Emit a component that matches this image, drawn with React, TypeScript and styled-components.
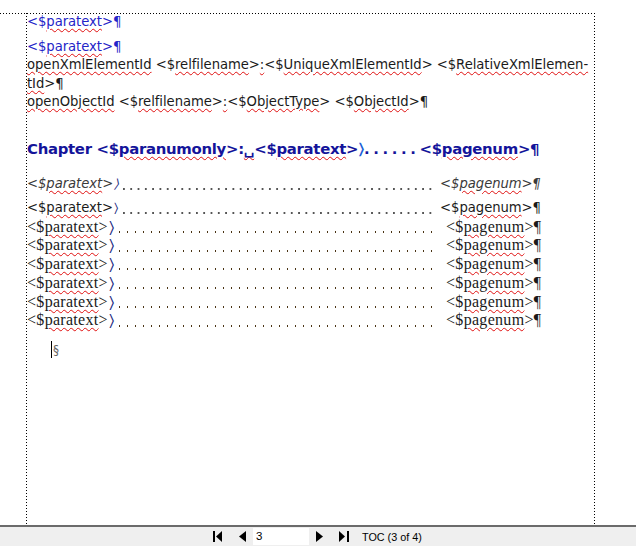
import React from "react"
import styled, { createGlobalStyle } from "styled-components"

const GlobalStyle = createGlobalStyle`
  html, body {
    margin: 0;
    padding: 0;
    background: #ffffff;
  }
  #root {
    height: 546px;
  }
`

const Window = styled.div`
  height: 546px;
  display: flex;
  flex-direction: column;
  overflow: hidden;
`

const Canvas = styled.div`
  flex: 1;
  background: #ffffff;
  padding-top: 13px;
  overflow: hidden;
`

const Page = styled.div`
  width: 595px;
  height: 100%;
  box-sizing: border-box;
  padding-left: 27px;
  background:
    linear-gradient(to right, #000 1px, transparent 1px) 0 0 / 3px 1px repeat-x,
    linear-gradient(to bottom, #000 1px, transparent 1px) 26px 0 / 1px 3px repeat-y,
    linear-gradient(to bottom, #000 1px, transparent 1px) 594px 0 / 1px 3px repeat-y;
  background-color: #fff;
`

const Line = styled.div<{ $color?: string; $gap?: number }>`
  font-family: "DejaVu Sans", Tahoma, sans-serif;
  font-size: 13.2px;
  letter-spacing: -0.05px;
  line-height: 18.5px;
  white-space: nowrap;
  color: ${p => p.$color ?? "#1a1a1a"};
  margin-top: ${p => p.$gap ?? 0}px;
`

const Squiggle = styled.span`
  text-decoration: underline wavy #e01010;
  text-decoration-thickness: 1px;
  text-underline-offset: 2px;
`

const Pilcrow = styled.span`
  letter-spacing: 0;
`

const Heading = styled.div`
  font-family: "DejaVu Sans", Tahoma, sans-serif;
  font-weight: bold;
  font-size: 14.9px;
  letter-spacing: -0.3px;
  line-height: 20px;
  color: #14149a;
  white-space: nowrap;
  margin-top: 27px;
`

const HeadingDots = styled.span`
  letter-spacing: 3.6px;
`

const TabMark = styled.span<{ $light?: boolean }>`
  color: ${p => (p.$light ? "#1b5fd8" : "#1c2a80")};
  margin-left: 1px;
`

const TocRow = styled.div<{ $serif?: boolean; $italic?: boolean; $gap?: number }>`
  display: flex;
  width: 514px;
  white-space: nowrap;
  font-family: ${p => (p.$serif ? '"Liberation Serif", "Times New Roman", serif' : '"DejaVu Sans", Tahoma, sans-serif')};
  font-size: ${p => (p.$serif ? "16px" : "13.2px")};
  font-style: ${p => (p.$italic ? "italic" : "normal")};
  letter-spacing: ${p => (p.$serif ? "0.3px" : "-0.05px")};
  line-height: ${p => (p.$serif ? "18.8px" : "18.5px")};
  color: ${p => (p.$italic ? "#3a3a3a" : "#1a1a1a")};
  margin-top: ${p => p.$gap ?? 0}px;
`

const Leader = styled.span<{ $serif?: boolean }>`
  flex: 1;
  margin: 0 ${p => (p.$serif ? "10px 0 5px" : "7px 0 5px")};
  background-image: linear-gradient(
    to right,
    ${p => (p.$serif ? "#4a3414" : "#555")} 1.5px,
    transparent 1.5px
  );
  background-size: ${p => (p.$serif ? "8px 1.5px" : "7.3px 1.5px")};
  background-repeat: repeat-x;
  background-position: left bottom 4px;
`

const CursorLine = styled.div`
  margin-top: 11px;
  margin-left: 24px;
  display: flex;
  align-items: center;
  height: 17px;
  font-family: "DejaVu Sans", Tahoma, sans-serif;
  font-size: 12px;
  color: #666;
`

const Caret = styled.span`
  width: 1px;
  height: 17px;
  background: #000;
  margin-right: 1px;
`

const StatusBar = styled.div`
  height: 19px;
  border-top: 2px solid #6b6b6b;
  background: #efefef;
  display: flex;
  align-items: center;
  padding-left: 213px;
  font-family: "Liberation Sans", Arial, sans-serif;
  font-size: 10.8px;
  color: #000;
`

const NavButton = styled.button<{ $space?: number }>`
  border: none;
  background: none;
  padding: 0;
  margin-right: ${p => p.$space ?? 0}px;
  display: flex;
  align-items: center;
  height: 19px;
`

const PageInput = styled.div`
  width: 56px;
  height: 17px;
  background: #fff;
  box-sizing: border-box;
  padding-left: 3px;
  line-height: 17px;
  font-size: 11.5px;
  margin-right: 7px;
`

const StatusText = styled.span`
  margin-left: 13px;
`

const P = () => <Pilcrow>¶</Pilcrow>

const tocRows = [0, 1, 2, 3, 4, 5]

export default function App() {
  return (
    <Window>
      <GlobalStyle />
      <Canvas>
        <Page>
          <Line $color="#2424c8">&lt;$<Squiggle>paratext</Squiggle>&gt;<P /></Line>
          <Line $color="#2424c8" $gap={6}>&lt;$<Squiggle>paratext</Squiggle>&gt;<P /></Line>
          <Line>
            <Squiggle>openXmlElementId</Squiggle> &lt;$<Squiggle>relfilename</Squiggle>&gt;<Squiggle>:</Squiggle>&lt;$<Squiggle>UniqueXmlElementId</Squiggle>&gt; &lt;$<Squiggle>RelativeXmlElemen-</Squiggle>
          </Line>
          <Line><Squiggle>tId</Squiggle>&gt;<P /></Line>
          <Line>
            <Squiggle>openObjectId</Squiggle> &lt;$<Squiggle>relfilename</Squiggle>&gt;<Squiggle>:</Squiggle>&lt;$<Squiggle>ObjectType</Squiggle>&gt; &lt;$<Squiggle>ObjectId</Squiggle>&gt;<P />
          </Line>
          <Heading>
            Chapter &lt;$<Squiggle>paranumonly</Squiggle>&gt;:<Squiggle>&#x2423;</Squiggle>&lt;$<Squiggle>paratext</Squiggle>&gt;<TabMark $light>&#x232A;</TabMark>
            <HeadingDots>......</HeadingDots>&lt;$<Squiggle>pagenum</Squiggle>&gt;<P />
          </Heading>
          <TocRow $italic $gap={16}>
            <span>&lt;$<Squiggle>paratext</Squiggle>&gt;<TabMark>&#x232A;</TabMark></span>
            <Leader />
            <span>&lt;$<Squiggle>pagenum</Squiggle>&gt;<P /></span>
          </TocRow>
          <TocRow $gap={6}>
            <span>&lt;$<Squiggle>paratext</Squiggle>&gt;<TabMark>&#x232A;</TabMark></span>
            <Leader />
            <span>&lt;$<Squiggle>pagenum</Squiggle>&gt;<P /></span>
          </TocRow>
          {tocRows.map(i => (
            <TocRow $serif key={i}>
              <span>&lt;$<Squiggle>paratext</Squiggle>&gt;<TabMark>&#x232A;</TabMark></span>
              <Leader $serif />
              <span>&lt;$<Squiggle>pagenum</Squiggle>&gt;<P /></span>
            </TocRow>
          ))}
          <CursorLine>
            <Caret />§
          </CursorLine>
        </Page>
      </Canvas>
      <StatusBar>
        <NavButton $space={16}>
          <svg width="10" height="11" viewBox="0 0 10 11"><rect x="0" y="0" width="2" height="11" fill="#000" /><path d="M9 0 L3 5.5 L9 11 Z" fill="#000" /></svg>
        </NavButton>
        <NavButton $space={7}>
          <svg width="7" height="11" viewBox="0 0 7 11"><path d="M7 0 L0 5.5 L7 11 Z" fill="#000" /></svg>
        </NavButton>
        <PageInput>3</PageInput>
        <NavButton $space={16}>
          <svg width="7" height="11" viewBox="0 0 7 11"><path d="M0 0 L7 5.5 L0 11 Z" fill="#000" /></svg>
        </NavButton>
        <NavButton>
          <svg width="10" height="11" viewBox="0 0 10 11"><path d="M0 0 L6 5.5 L0 11 Z" fill="#000" /><rect x="8" y="0" width="2" height="11" fill="#000" /></svg>
        </NavButton>
        <StatusText>TOC (3 of 4)</StatusText>
      </StatusBar>
    </Window>
  )
}
